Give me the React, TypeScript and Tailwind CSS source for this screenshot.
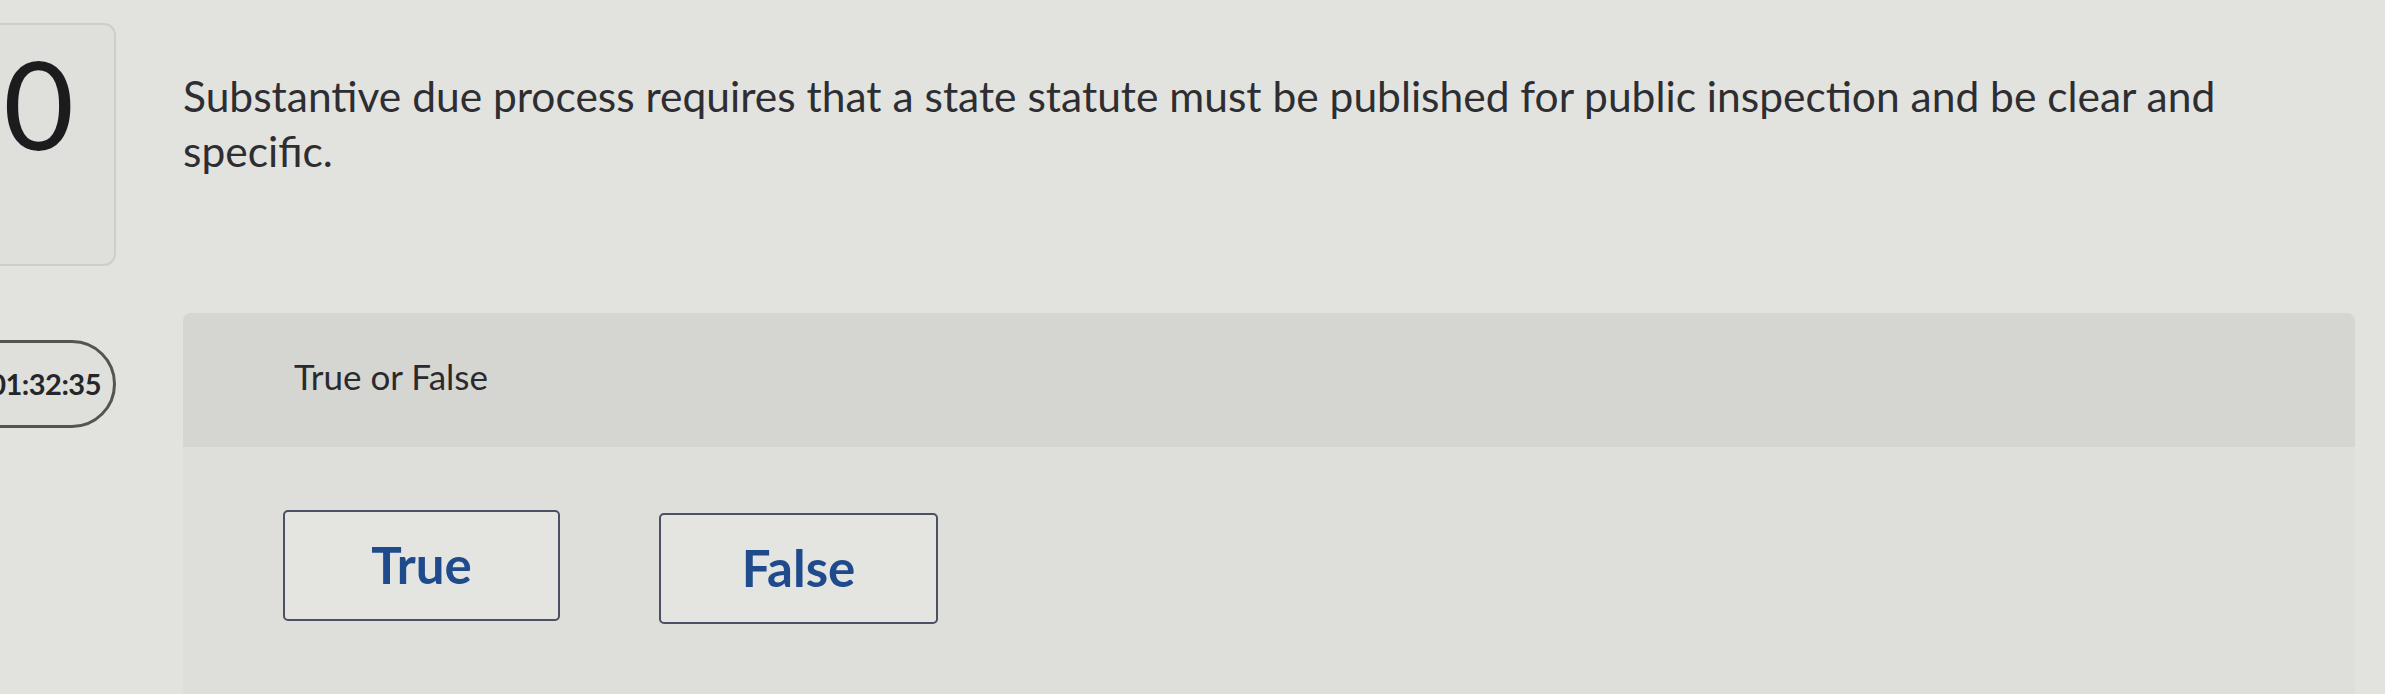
import React from "react";

export default function App() {
  return (
    <div
      className="h-[694px] w-full overflow-hidden bg-[#e2e3df] flex"
      style={{ fontFamily: "Lato, 'Noto Sans', sans-serif" }}
    >
      {/* left column */}
      <div className="w-[183px] shrink-0 flex flex-col items-end pr-[67px]">
        <div className="mt-[23px] w-[160px] h-[243px] shrink-0 rounded-[12px] border-2 border-[#cdcec9] bg-[#dfe0dc] flex items-start justify-end pr-[38px] pt-[17px]">
          <span className="text-[122px] leading-none text-[#1c1c1e] font-normal tracking-[2px]">30</span>
        </div>
        <div className="mt-[74px] w-[160px] h-[88px] shrink-0 rounded-full border-[3px] border-[#55554f] bg-[#dfe0dc] flex items-center justify-end pr-[12px]">
          <span className="text-[29px] font-bold text-[#26262a] tracking-[-0.5px]">01:32:35</span>
        </div>
      </div>

      {/* right column */}
      <div className="flex-1 flex flex-col pr-[30px]">
        <p className="mt-[68px] text-[42.5px] leading-[55px] text-[#2e2e32] w-[2080px]">
          Substantive due process requires that a state statute must be published for public inspection and be clear and specific.
        </p>
        <div className="mt-[135px] flex-1 rounded-t-[8px] bg-[#dedfdb] flex flex-col">
          <div className="h-[134px] bg-[#d5d6d2] rounded-t-[8px] pl-[111px] pt-[43px]">
            <span className="text-[35px] leading-[40px] text-[#2a2a2e]">True or False</span>
          </div>
          <div className="pt-[63px] pl-[100px] flex gap-[99px]">
            <button className="w-[277px] h-[111px] rounded-[5px] border-2 border-[#4b5063] bg-[#e4e5e1] text-[51px] font-bold text-[#1f4a8c]">
              True
            </button>
            <button className="w-[279px] h-[111px] mt-[3px] rounded-[5px] border-2 border-[#4b5063] bg-[#e4e5e1] text-[51px] font-bold text-[#1f4a8c]">
              False
            </button>
          </div>
        </div>
      </div>
    </div>
  );
}
